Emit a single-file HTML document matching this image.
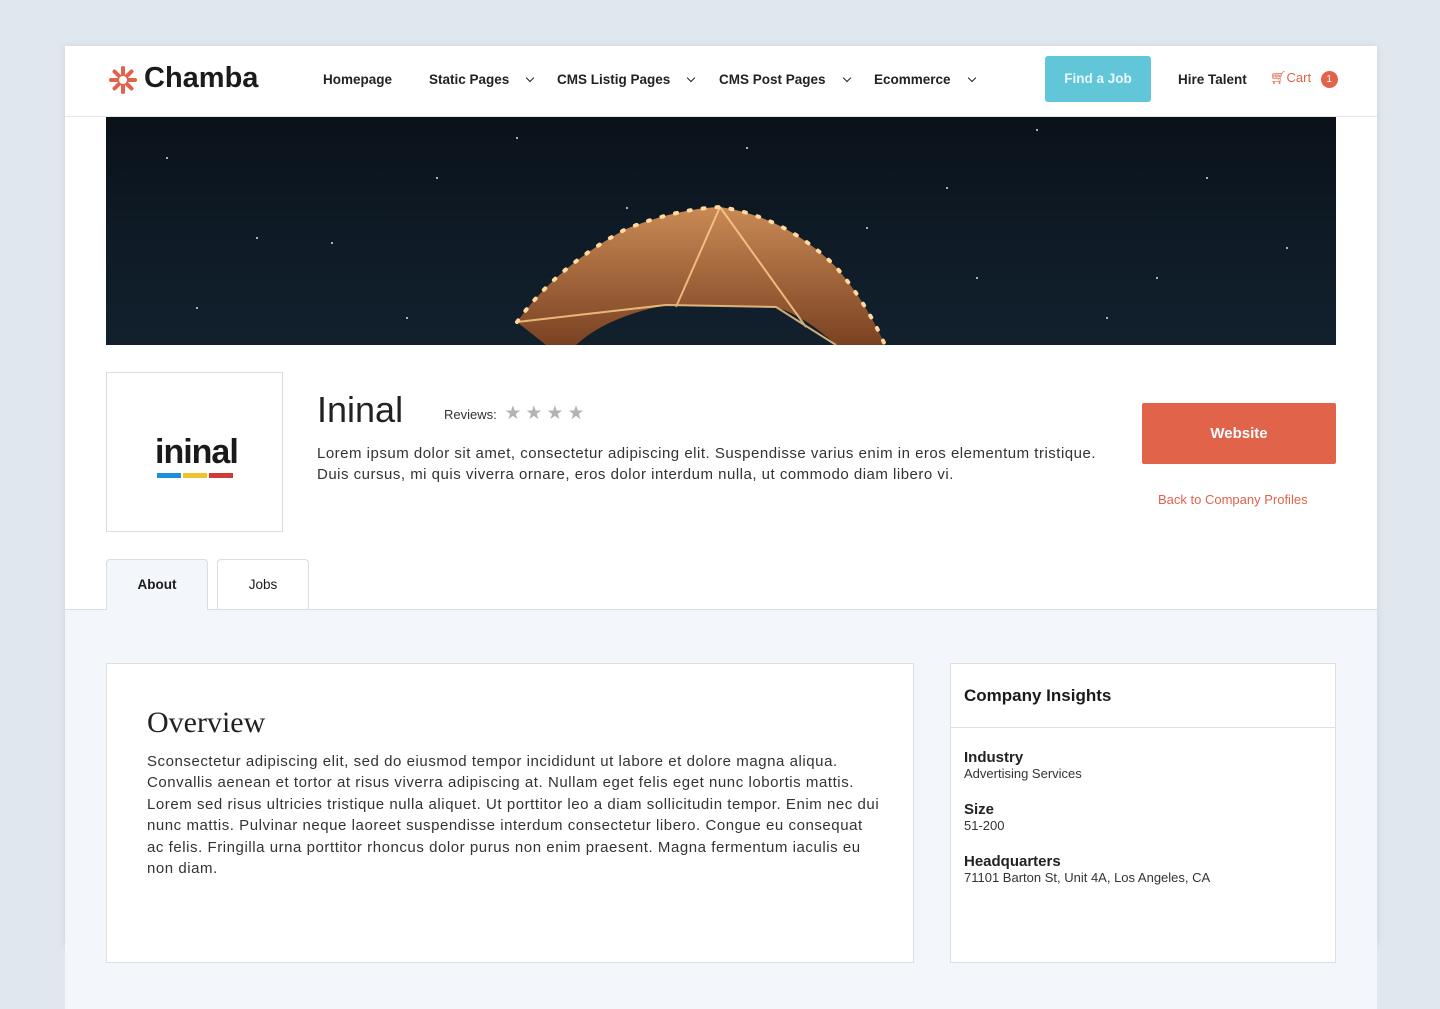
<!DOCTYPE html>
<html><head><meta charset="utf-8"><style>
*{box-sizing:border-box;margin:0;padding:0}
body{width:1440px;height:900px;overflow:hidden;background:#dfe7ef;font-family:"Liberation Sans",sans-serif;color:#1a1a1a}
.card{position:absolute;left:65px;top:46px;width:1312px;height:900px;background:#fff;box-shadow:0 0 8px rgba(0,0,0,.08)}
.hdr{position:absolute;left:0;top:0;width:1312px;height:71px;border-bottom:1px solid #e3e7ec}
.nav{position:absolute;top:26px;font-size:13.5px;font-weight:bold;color:#222}
.chev{display:inline-block;width:6px;height:6px;border-right:1.8px solid #222;border-bottom:1.8px solid #222;transform:rotate(45deg);margin-left:18px;position:relative;top:-3px}
.hero{position:absolute;left:41px;top:71px;width:1230px;height:228px;background:linear-gradient(#0b1119,#0f1c28 60%,#12202d);overflow:hidden}
.star{position:absolute;width:2px;height:2px;background:#dde;border-radius:50%}
.low{position:absolute;left:0;top:563px;width:1312px;height:400px;background:#f3f6fa;border-top:1px solid #d7dee6}
</style></head><body>
<div class="card">
<div class="hdr">
 <svg style="position:absolute;left:43px;top:19px" width="30" height="30" viewBox="0 0 30 30"><g stroke="#e0634a" stroke-width="4" stroke-linecap="round"><line x1="15" y1="3" x2="15" y2="27"/><line x1="3" y1="15" x2="27" y2="15"/><line x1="6.5" y1="6.5" x2="23.5" y2="23.5"/><line x1="23.5" y1="6.5" x2="6.5" y2="23.5"/></g><circle cx="15" cy="15" r="4" fill="#fff"/></svg>
 <div style="position:absolute;left:79px;top:16px;font-size:29px;font-weight:bold;color:#1b1b1b">Chamba</div>
 <div class="nav" style="left:258px">Homepage</div>
 <div class="nav" style="left:364px">Static Pages<span class="chev"></span></div>
 <div class="nav" style="left:492px">CMS Listig Pages<span class="chev"></span></div>
 <div class="nav" style="left:654px">CMS Post Pages<span class="chev"></span></div>
 <div class="nav" style="left:809px">Ecommerce<span class="chev"></span></div>
 <div style="position:absolute;left:980px;top:10px;width:106px;height:46px;background:#62c6d9;border-radius:3px;color:#e8f8fb;font-size:13.5px;font-weight:bold;text-align:center;line-height:46px">Find a Job</div>
 <div class="nav" style="left:1113px">Hire Talent</div>
 <div style="position:absolute;left:1205px;top:24px;font-size:13px;color:#e0634a">🛒︎Cart <span style="display:inline-block;width:17px;height:17px;border-radius:50%;background:#e0634a;color:#fff;font-size:10px;text-align:center;line-height:17px;margin-left:6px">1</span></div>
</div>
<div class="hero">
 <div class="star" style="left:60px;top:40px"></div><div class="star" style="left:150px;top:120px"></div><div class="star" style="left:225px;top:125px"></div><div class="star" style="left:330px;top:60px"></div><div class="star" style="left:410px;top:20px"></div><div class="star" style="left:520px;top:90px"></div><div class="star" style="left:640px;top:30px"></div><div class="star" style="left:760px;top:110px"></div><div class="star" style="left:840px;top:70px"></div><div class="star" style="left:930px;top:12px"></div><div class="star" style="left:1050px;top:160px"></div><div class="star" style="left:1100px;top:60px"></div><div class="star" style="left:1180px;top:130px"></div><div class="star" style="left:90px;top:190px"></div><div class="star" style="left:300px;top:200px"></div><div class="star" style="left:1000px;top:200px"></div><div class="star" style="left:870px;top:160px"></div>
 <svg style="position:absolute;left:0;top:0" width="1230" height="228" viewBox="0 0 1230 228">
  <defs><linearGradient id="g" x1="0" y1="0" x2="0" y2="1"><stop offset="0" stop-color="#c98a55"/><stop offset="1" stop-color="#7a4222"/></linearGradient></defs>
  <path d="M411 205 Q450 150 520 112 Q570 92 614 90 Q680 100 730 150 Q760 185 779 228 L730 228 Q700 200 670 190 L560 188 Q500 200 470 228 L440 228 Z" fill="url(#g)"/>
  <path d="M411 205 Q450 150 520 112 Q570 92 614 90 Q680 100 730 150 Q760 185 779 228" fill="none" stroke="#ffd9a0" stroke-width="4" stroke-linecap="round" stroke-dasharray="2 12"/>
  <path d="M411 205 L560 188 L670 190 L730 228 M614 90 L570 190 M614 90 L700 210" fill="none" stroke="#ffcf90" stroke-width="2" opacity=".8"/>
 </svg>
</div>
<div style="position:absolute;left:41px;top:326px;width:177px;height:160px;border:1px solid #dcdcdc">
 <div style="position:absolute;left:48px;top:62px;font-size:34px;font-weight:bold;letter-spacing:-1px;line-height:34px">ininal</div>
 <div style="position:absolute;left:50px;top:100px;width:24px;height:5px;background:#1e90d6"></div>
 <div style="position:absolute;left:76px;top:100px;width:24px;height:5px;background:#f0c22c"></div>
 <div style="position:absolute;left:102px;top:100px;width:24px;height:5px;background:#d33a36"></div>
</div>
<div style="position:absolute;left:252px;top:343px;font-size:36px;color:#222">Ininal</div>
<div style="position:absolute;left:379px;top:356px;font-size:13px;color:#333">Reviews: <span style="color:#b3b3b3;font-size:19px;letter-spacing:4px;margin-left:4px">★★★★</span></div>
<div style="position:absolute;left:252px;top:397px;width:820px;font-size:15px;letter-spacing:0.5px;line-height:21px;color:#333;white-space:nowrap">Lorem ipsum dolor sit amet, consectetur adipiscing elit. Suspendisse varius enim in eros elementum tristique.<br>Duis cursus, mi quis viverra ornare, eros dolor interdum nulla, ut commodo diam libero vi.</div>
<div style="position:absolute;left:1077px;top:357px;width:194px;height:61px;background:#e0634a;border-radius:2px;color:#fff;font-weight:bold;font-size:15px;text-align:center;line-height:61px">Website</div>
<div style="position:absolute;left:1093px;top:446px;font-size:13px;color:#e0634a">Back to Company Profiles</div>
<div class="low"></div>
<div style="position:absolute;left:41px;top:513px;width:102px;height:51px;background:#f3f6fa;border:1px solid #d7dee6;border-bottom:none;border-radius:4px 4px 0 0;font-size:13.5px;font-weight:bold;text-align:center;line-height:50px">About</div>
<div style="position:absolute;left:152px;top:513px;width:92px;height:50px;background:#fff;border:1px solid #d7dee6;border-bottom:none;border-radius:4px 4px 0 0;font-size:13.5px;text-align:center;line-height:50px">Jobs</div>
<div style="position:absolute;left:41px;top:617px;width:808px;height:300px;background:#fff;border:1px solid #dbe0e6">
 <div style="position:absolute;left:40px;top:42px;font-family:'Liberation Serif',serif;font-size:30px;color:#222">Overview</div>
 <div style="position:absolute;left:40px;top:87px;width:740px;font-size:15px;letter-spacing:0.55px;line-height:21.4px;color:#333;white-space:nowrap">Sconsectetur adipiscing elit, sed do eiusmod tempor incididunt ut labore et dolore magna aliqua.<br>Convallis aenean et tortor at risus viverra adipiscing at. Nullam eget felis eget nunc lobortis mattis.<br>Lorem sed risus ultricies tristique nulla aliquet. Ut porttitor leo a diam sollicitudin tempor. Enim nec dui<br>nunc mattis. Pulvinar neque laoreet suspendisse interdum consectetur libero. Congue eu consequat<br>ac felis. Fringilla urna porttitor rhoncus dolor purus non enim praesent. Magna fermentum iaculis eu<br>non diam.</div>
</div>
<div style="position:absolute;left:885px;top:617px;width:386px;height:300px;background:#fff;border:1px solid #dbe0e6">
 <div style="height:64px;border-bottom:1px solid #dbe0e6;padding:22px 0 0 13px;font-size:17px;font-weight:bold">Company Insights</div>
 <div style="padding:22px 0 0 13px;font-size:13px;color:#333;line-height:16px">
  <div style="font-size:15px;font-weight:bold;color:#222">Industry</div><div>Advertising Services</div>
  <div style="font-size:15px;font-weight:bold;color:#222;margin-top:20px">Size</div><div>51-200</div>
  <div style="font-size:15px;font-weight:bold;color:#222;margin-top:20px">Headquarters</div><div>71101 Barton St, Unit 4A, Los Angeles, CA</div>
 </div>
</div>
</div>
</body></html>
